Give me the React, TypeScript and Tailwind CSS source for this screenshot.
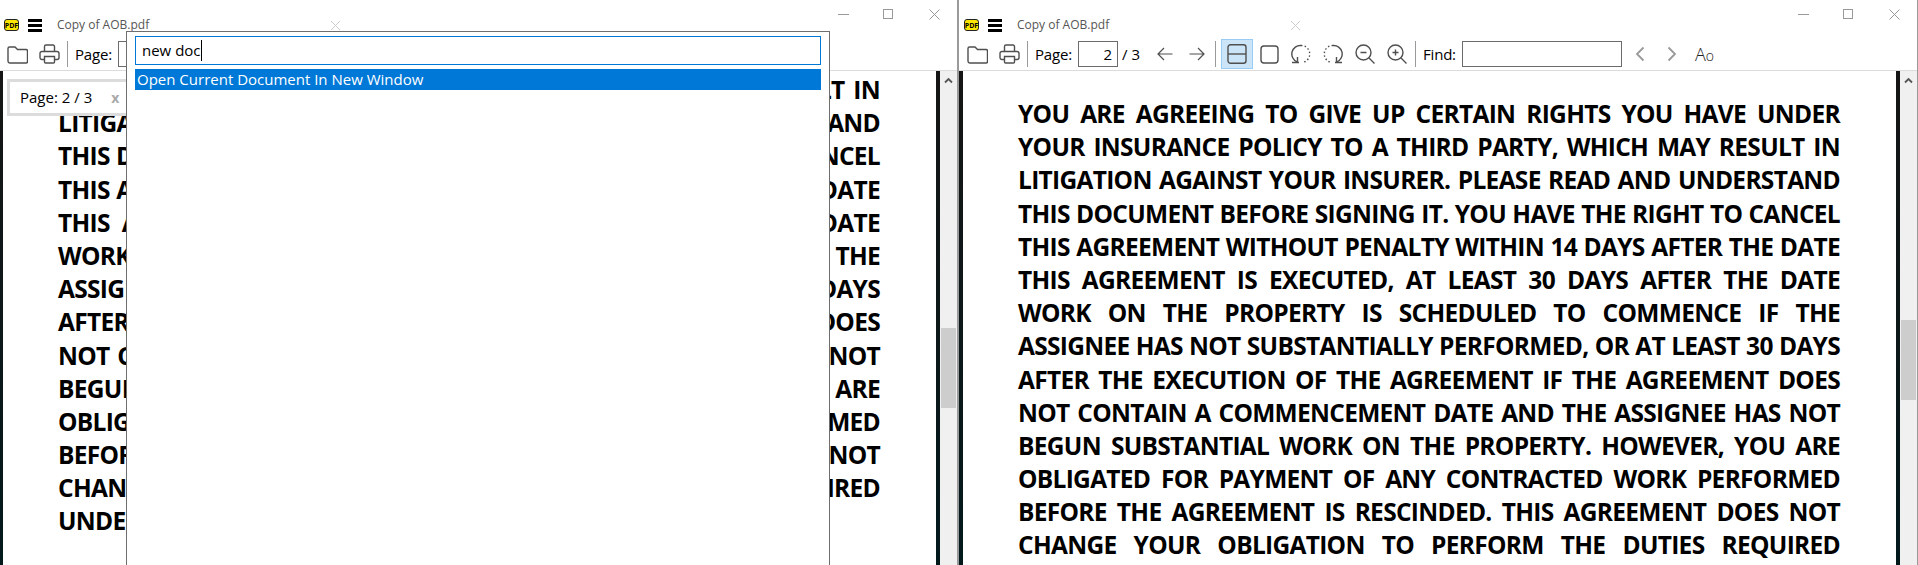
import { FC, ReactNode } from "react";

const LINES = [
  "YOU ARE AGREEING TO GIVE UP CERTAIN RIGHTS YOU HAVE UNDER",
  "YOUR INSURANCE POLICY TO A THIRD PARTY, WHICH MAY RESULT IN",
  "LITIGATION AGAINST YOUR INSURER. PLEASE READ AND UNDERSTAND",
  "THIS DOCUMENT BEFORE SIGNING IT. YOU HAVE THE RIGHT TO CANCEL",
  "THIS AGREEMENT WITHOUT PENALTY WITHIN 14 DAYS AFTER THE DATE",
  "THIS AGREEMENT IS EXECUTED, AT LEAST 30 DAYS AFTER THE DATE",
  "WORK ON THE PROPERTY IS SCHEDULED TO COMMENCE IF THE",
  "ASSIGNEE HAS NOT SUBSTANTIALLY PERFORMED, OR AT LEAST 30 DAYS",
  "AFTER THE EXECUTION OF THE AGREEMENT IF THE AGREEMENT DOES",
  "NOT CONTAIN A COMMENCEMENT DATE AND THE ASSIGNEE HAS NOT",
  "BEGUN SUBSTANTIAL WORK ON THE PROPERTY. HOWEVER, YOU ARE",
  "OBLIGATED FOR PAYMENT OF ANY CONTRACTED WORK PERFORMED",
  "BEFORE THE AGREEMENT IS RESCINDED. THIS AGREEMENT DOES NOT",
  "CHANGE YOUR OBLIGATION TO PERFORM THE DUTIES REQUIRED",
];
const LAST_LINE = "UNDER THIS AGREEMENT.";

const Icon: FC<{ w: number; h: number; children: ReactNode }> = ({ w, h, children }) => (
  <svg width={w} height={h} viewBox={`0 0 ${w} ${h}`} fill="none" stroke="#4f4f4f" strokeWidth="1.4">
    {children}
  </svg>
);

const Btn: FC<{ children: ReactNode }> = ({ children }) => (
  <div className="w-[32px] h-[26px] flex items-center justify-center shrink-0">{children}</div>
);

const Separator = () => <div className="w-px h-[26px] bg-[#9a9a9a] shrink-0" />;

const Toolbar = () => (
  <div className="h-[33px] flex items-start pl-[2px] pt-[3px] border-b border-[#dcdcdc] text-[15px] text-black">
    <Btn>
      <Icon w={21} h={19}>
        <path d="M1 3.500A1.500 1.500 0 0 1 2.500 2h5.500l2.500 2.500h8.500A1.500 1.500 0 0 1 20.500 6v10.500a1.500 1.500 0 0 1-1.500 1.500H3a2 2 0 0 1-2-2z" />
      </Icon>
    </Btn>
    <Btn>
      <Icon w={21} h={20}>
        <path d="M5.500 7.500V2.500A1.500 1.500 0 0 1 7 1h7a1.500 1.500 0 0 1 1.500 1.500v5" />
        <path d="M5 15.500H3A2 2 0 0 1 1 13.500V9.500a2 2 0 0 1 2-2h15a2 2 0 0 1 2 2v4a2 2 0 0 1-2 2h-2" />
        <path d="M5.500 12.500h10v5.500a1 1 0 0 1-1 1h-8a1 1 0 0 1-1-1z" />
      </Icon>
    </Btn>
    <div className="ml-[2px]"><Separator /></div>
    <span className="ml-[7px] w-[43px] leading-[26px] tracking-[-0.2px]">Page:</span>
    <div className="w-[40px] h-[26px] border border-[#6b6b6b] text-right pr-[5px] leading-[25px]">2</div>
    <span className="ml-[4px] w-[27px] leading-[26px]">/ 3</span>
    <Btn>
      <Icon w={16} h={14}>
        <path d="M15.500 7H1M7 1 1 7l6 6" strokeWidth="1.200" />
      </Icon>
    </Btn>
    <Btn>
      <Icon w={16} h={14}>
        <path d="M0.500 7H15M9 1l6 6-6 6" strokeWidth="1.200" />
      </Icon>
    </Btn>
    <div className="ml-[2px]"><Separator /></div>
    {/* continuous page view, active */}
    <div className="ml-[5px] -mt-[2px] w-[32px] h-[30px] bg-[#cce4f7] border border-[#99ccf5] flex items-center justify-center shrink-0">
      <Icon w={20} h={20}>
        <rect x="1" y="0.800" width="18" height="18.400" rx="2.500" />
        <path d="M1 10h18" />
      </Icon>
    </div>
    <Btn>
      <Icon w={19} h={19}>
        <rect x="1" y="1" width="17" height="17" rx="3" />
      </Icon>
    </Btn>
    <Btn>
      <Icon w={20} h={20}>
        <path d="M6 17.800A8.500 8.500 0 0 1 10 1.500" />
        <path d="M10 1.500a8.500 8.500 0 0 1 1.500 16.900" strokeDasharray="1.500 2.200" />
        <path d="M1 18.500h7M6.500 13v5.500" />
      </Icon>
    </Btn>
    <Btn>
      <Icon w={20} h={20}>
        <path d="M14 17.800A8.500 8.500 0 0 0 10 1.500" />
        <path d="M10 1.500a8.500 8.500 0 0 0-1.500 16.900" strokeDasharray="1.500 2.200" />
        <path d="M19 18.500h-7M13.500 13v5.500" />
      </Icon>
    </Btn>
    <Btn>
      <Icon w={20} h={20}>
        <circle cx="8.500" cy="8.500" r="7.500" />
        <path d="m14 14 5.500 5.500M5.500 8.500h6" />
      </Icon>
    </Btn>
    <Btn>
      <Icon w={20} h={20}>
        <circle cx="8.500" cy="8.500" r="7.500" />
        <path d="m14 14 5.500 5.500M5.500 8.500h6M8.500 5.500v6" />
      </Icon>
    </Btn>
    <div className="ml-[2px]"><Separator /></div>
    <span className="ml-[7px] w-[39px] leading-[26px] tracking-[-0.2px]">Find:</span>
    <div className="w-[160px] h-[26px] border border-[#6b6b6b] shrink-0" />
    <div className="ml-[2px]">
      <Btn>
        <Icon w={10} h={16}>
          <path d="M8.500 1.500 2 8l6.500 6.500" stroke="#999" strokeWidth="1.800" />
        </Icon>
      </Btn>
    </div>
    <Btn>
      <Icon w={10} h={16}>
        <path d="M1.500 1.500 8 8l-6.500 6.500" stroke="#999" strokeWidth="1.800" />
      </Icon>
    </Btn>
    <div className="w-[32px] h-[26px] pl-[7px] leading-[26px] text-[18px] text-[#222] font-light shrink-0 whitespace-nowrap">
      A<span className="text-[14px]">o</span>
    </div>
  </div>
);

const TitleBar = () => (
  <div className="h-[38px] relative">
    {/* app icon */}
    <div className="absolute left-[5px] top-[19px] w-[15px] h-[12px] rounded-[3px] bg-[#ffe800] border border-[#222] flex items-center justify-center text-[7px] font-bold leading-none text-black">
      PDF
    </div>
    {/* menu */}
    <div className="absolute left-[29px] top-[19px] w-[14px] flex flex-col gap-[2px]">
      <div className="h-[3px] bg-black" />
      <div className="h-[3px] bg-black" />
      <div className="h-[3px] bg-black" />
    </div>
    <span className="absolute left-[58px] top-[16px] text-[12px] leading-[18px] text-[#555]">Copy of AOB.pdf</span>
    <svg width="11" height="11" className="absolute left-[331px] top-[20px]" stroke="#ccc" strokeWidth="1">
      <path d="m1 1 9 9M10 1l-9 9" />
    </svg>
    {/* window buttons */}
    <div className="absolute left-[839px] top-[14px] w-[11px] h-px bg-[#999]" />
    <div className="absolute left-[884px] top-[9px] w-[10px] h-[10px] border border-[#999]" />
    <svg width="11" height="11" className="absolute left-[930px] top-[9px]" stroke="#999" strokeWidth="1">
      <path d="m0.500 0.500 10 10M10.500 0.500l-10 10" />
    </svg>
  </div>
);

const Scrollbar: FC<{ thumbClass: string }> = ({ thumbClass }) => (
  <div className="w-[17px] h-full bg-[#f0f0f0] relative shrink-0">
    <svg width="9" height="7" className="absolute left-[4px] top-[6px]" stroke="#555" strokeWidth="1.800" fill="none">
      <path d="m1 5.500 3.500-3.500 3.500 3.500" />
    </svg>
    <div className={`absolute left-[1px] right-[1px] h-[80px] bg-[#cdcdcd] ${thumbClass}`} />
  </div>
);

const Band = () => <div className="w-[4px] shrink-0 bg-linear-to-b from-[#151515] to-[#02191c]" />;

const PdfWindow: FC<{ lines: string[]; paddingTop: string; thumbClass: string }> = ({
  lines,
  paddingTop,
  thumbClass,
}) => (
  <div className="w-[960px] h-[565px] flex flex-col bg-white border-x border-[#9a9a9a] overflow-hidden shrink-0">
    <TitleBar />
    <Toolbar />
    <div className="flex-1 min-h-0 flex">
      <Band />
      <div className={`flex-1 min-w-0 overflow-hidden pl-[55px] pr-[56px] ${paddingTop}`}>
        {lines.map((line) => (
          <div
            key={line}
            className={`h-[33.2px] leading-[33.2px] text-[24.500px] tracking-[-0.7px] font-bold text-black whitespace-nowrap text-justify ${
              line === LAST_LINE ? "[text-align-last:left]" : "[text-align-last:justify]"
            }`}
          >
            {line}
          </div>
        ))}
      </div>
      <Band />
      <Scrollbar thumbClass={thumbClass} />
    </div>
  </div>
);

export default function App() {
  return (
    <div
      className="relative w-[1918px] h-[565px] overflow-hidden"
      style={{ fontFamily: '"Open Sans", "Noto Sans", sans-serif' }}
    >
      <div className="flex -ml-[2px]">
        <PdfWindow lines={[...LINES.slice(1), LAST_LINE]} paddingTop="pt-[2px]" thumbClass="top-[257px]" />
        <PdfWindow lines={LINES} paddingTop="pt-[26px]" thumbClass="top-[249px]" />
      </div>

      {/* page number toast */}
      <div className="absolute left-[7px] top-[79px] w-[125px] h-[37px] border-[3px] border-[#dcdcdc] bg-white flex items-center pl-[10px] text-[15px] text-black">
        Page: 2 / 3
        <span className="ml-[19px] text-[#aaa] font-bold text-[14px]">x</span>
      </div>

      {/* command palette */}
      <div className="absolute left-[126px] top-[31px] w-[704px] h-[534px] bg-white border border-[#6e6e6e] border-b-0 px-[8px] pt-[4px]">
        <div className="h-[29px] border border-[#0078d7] pl-[6px] flex items-center text-[15px] text-black">
          new do<span className="border-r border-black leading-[21px]">c</span>
        </div>
        <div className="mt-[4px] h-[21px] bg-[#0078d7] pl-[2px] text-[15px] leading-[21px] text-white">
          Open Current Document In New Window
        </div>
      </div>
    </div>
  );
}
